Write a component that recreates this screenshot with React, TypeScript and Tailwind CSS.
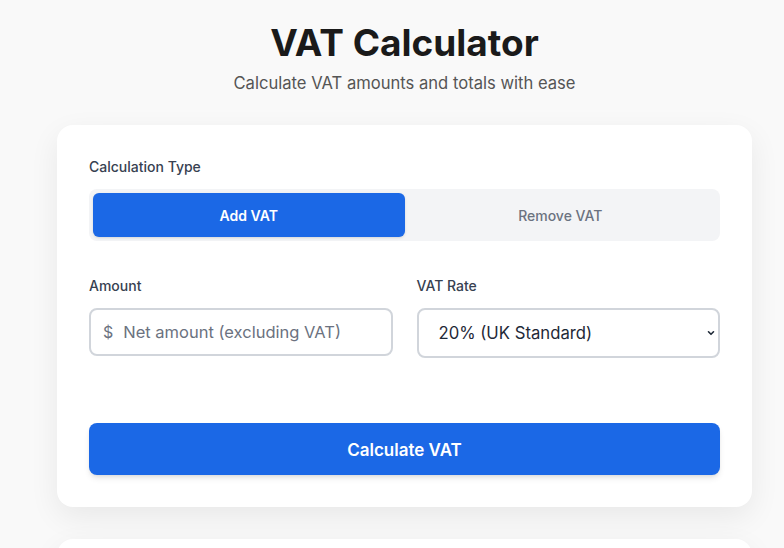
import { useState } from "react";

export default function App() {
  const [mode, setMode] = useState<"add" | "remove">("add");
  const [amount, setAmount] = useState("");
  const [rate, setRate] = useState("20");

  return (
    <div className="min-h-screen bg-[#f9f9f9] text-[#1f2937] font-['Inter',sans-serif] overflow-hidden">
      <div className="pl-[57px] pr-[32px] pt-[21px]">
        {/* Header */}
        <header className="text-center">
          <h1 className="text-[37px] leading-[44px] font-bold text-[#1a1a1a]">VAT Calculator</h1>
          <p className="mt-[6px] text-[16.6px] leading-6 text-[#555]">
            Calculate VAT amounts and totals with ease
          </p>
        </header>

        {/* Calculator card */}
        <div className="mt-[30px] rounded-2xl bg-white p-8 shadow-[0_10px_30px_rgba(0,0,0,0.07)]">
          <div className="mb-[35px]">
            <label className="block text-sm font-medium text-[#374151] mb-3">Calculation Type</label>
            <div className="flex rounded-lg bg-[#f3f4f6] p-1">
              <button
                onClick={() => setMode("add")}
                className={
                  mode === "add"
                    ? "flex-1 rounded-md bg-[#1b68e6] pt-[13px] pb-[11px] text-sm font-semibold text-white shadow-sm"
                    : "flex-1 rounded-md pt-[13px] pb-[11px] text-sm font-medium text-[#6b7280]"
                }
              >
                Add VAT
              </button>
              <button
                onClick={() => setMode("remove")}
                className={
                  mode === "remove"
                    ? "flex-1 rounded-md bg-[#1b68e6] pt-[13px] pb-[11px] text-sm font-semibold text-white shadow-sm"
                    : "flex-1 rounded-md pt-[13px] pb-[11px] text-sm font-medium text-[#6b7280]"
                }
              >
                Remove VAT
              </button>
            </div>
          </div>

          <div className="grid grid-cols-2 gap-6">
            <div>
              <label className="block text-sm font-medium text-[#374151] mb-3">Amount</label>
              <div className="flex h-[48px] items-center rounded-lg border-2 border-[#d1d5db] px-3">
                <span className="text-[16px] text-[#6b7280]">$</span>
                <input
                  value={amount}
                  onChange={(e) => setAmount(e.target.value)}
                  placeholder={mode === "add" ? "Net amount (excluding VAT)" : "Gross amount (including VAT)"}
                  className="ml-[10px] w-full bg-transparent text-[16.5px] text-[#1f2937] outline-none placeholder:text-[#6b7280]"
                />
              </div>
            </div>
            <div>
              <label className="block text-sm font-medium text-[#374151] mb-3">VAT Rate</label>
              <div className="relative">
                <select
                  value={rate}
                  onChange={(e) => setRate(e.target.value)}
                  className="h-[50px] w-full appearance-none rounded-lg border-2 border-[#d1d5db] bg-white pl-5 pr-8 pt-[2px] text-[16.7px] text-[#1f2937] outline-none"
                >
                  <option value="20">20% (UK Standard)</option>
                  <option value="5">5% (UK Reduced)</option>
                  <option value="0">0% (Zero Rated)</option>
                </select>
                <svg
                  className="pointer-events-none absolute right-[4px] top-1/2 -translate-y-1/2"
                  width="10"
                  height="10"
                  viewBox="0 0 10 10"
                  fill="none"
                  stroke="#1f2937"
                  strokeWidth="1.6"
                  strokeLinecap="round"
                  strokeLinejoin="round"
                >
                  <path d="M2.5 3.8 5 6.3 7.5 3.8" />
                </svg>
              </div>
            </div>
          </div>

          <button className="mt-[65px] h-[52px] w-full rounded-lg bg-[#1b68e6] pt-1 text-[17px] font-semibold text-white shadow-md">
            Calculate VAT
          </button>
        </div>

        {/* Results card (below the fold) */}
        <div className="mt-8 h-40 rounded-2xl bg-white shadow-[0_10px_30px_rgba(0,0,0,0.07)]" />
      </div>
    </div>
  );
}
